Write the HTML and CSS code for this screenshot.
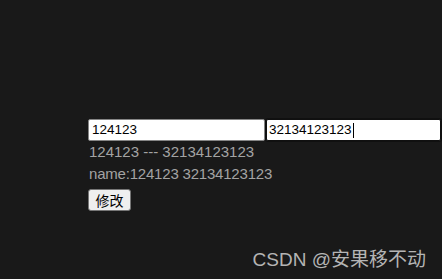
FILE: index.html
```html
<!DOCTYPE html>
<html lang="zh-CN">
<head>
<meta charset="utf-8">
<title>Demo</title>
<link rel="stylesheet" href="styles.css">
</head>
<body>
  <main class="app">
    <div class="fields">
      <div class="field">124123</div>
      <div class="field field-focused">32134123123<span class="caret"></span></div>
    </div>
    <div class="line">124123 --- 32134123123</div>
    <div class="line">name:124123 32134123123</div>
    <button class="btn" type="button">修改</button>
  </main>
  <div class="watermark">CSDN @安果移不动</div>
</body>
</html>
```
FILE: styles.css
```css
html, body {
  margin: 0;
  height: 100%;
}
body {
  background: #191919;
  position: relative;
  overflow: hidden;
  font-family: "Liberation Sans", Arial, "Noto Sans CJK SC", sans-serif;
}
.app {
  padding: 119px 0 0 88px;
  display: flex;
  flex-direction: column;
  align-items: flex-start;
}
.fields {
  display: flex;
  gap: 1px;
}
.field {
  box-sizing: border-box;
  width: 177px;
  height: 22px;
  background: #fff;
  border: 1px solid #858585;
  border-radius: 2px;
  padding: 0 3px;
  font-family: "Liberation Sans", Arial, sans-serif;
  font-size: 13.5px;
  line-height: 20px;
  color: #000;
  display: flex;
  align-items: center;
}
.field-focused {
  width: 175px;
  border-color: #101010;
  box-shadow: 0 0 0 1px #101010;
  padding-left: 2px;
}
.caret {
  display: inline-block;
  width: 1px;
  height: 15px;
  background: #000;
  margin-left: 1px;
}
.line {
  color: #a3a3a3;
  font-size: 15px;
  line-height: 22px;
  padding-left: 1px;
}
.line + .line {
  letter-spacing: -0.2px;
}
.btn {
  margin-top: 4px;
  box-sizing: border-box;
  width: 43px;
  height: 22px;
  padding: 0;
  background: #efefef;
  border: 1px solid #767676;
  border-radius: 3px;
  font-family: "Noto Sans CJK SC", sans-serif;
  font-size: 14px;
  color: #000;
}
.watermark {
  position: absolute;
  right: 16px;
  bottom: 8px;
  color: #b4b4b4;
  font-family: "Liberation Sans", Arial, "Noto Sans CJK SC", sans-serif;
  font-size: 19px;
  line-height: 22px;
}
```
